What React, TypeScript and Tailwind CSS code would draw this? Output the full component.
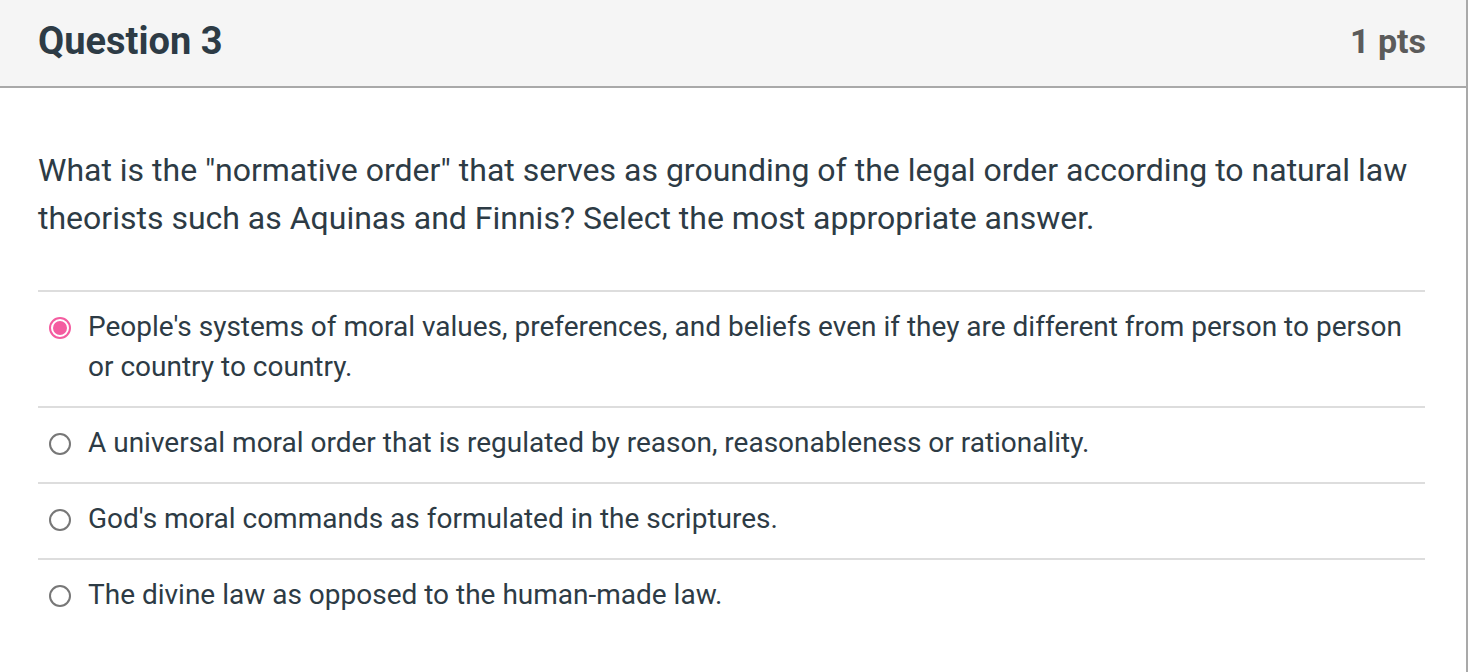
const options = [
  {
    text: "People's systems of moral values, preferences, and beliefs even if they are different from person to person or country to country.",
    selected: true,
  },
  { text: 'A universal moral order that is regulated by reason, reasonableness or rationality.', selected: false },
  { text: "God's moral commands as formulated in the scriptures.", selected: false },
  { text: 'The divine law as opposed to the human-made law.', selected: false },
]

function Radio({ checked }: { checked: boolean }) {
  if (checked) {
    return (
      <span className="flex h-[22px] w-[22px] shrink-0 items-center justify-center rounded-full border-2 border-[#f45ca0] bg-white">
        <span className="h-[14px] w-[14px] rounded-full bg-[#f45ca0]" />
      </span>
    )
  }
  return <span className="block h-[22px] w-[22px] shrink-0 rounded-full border-2 border-[#777777] bg-white" />
}

export default function App() {
  return (
    <div
      className="h-[672px] w-[1470px] bg-white text-[#2d3b45]"
      style={{ fontFamily: 'Roboto, "Liberation Sans", sans-serif' }}
    >
      <div className="h-full w-[1468px] border-r-2 border-[#a9a9a9]">
        <div className="flex h-[88px] items-center justify-between border-b-2 border-[#a9a9a9] bg-[#f5f5f5] pl-[38px] pr-[40px] pb-[4px]">
          <h2 className="text-[38px] font-bold leading-none text-[#2d3b45]">Question 3</h2>
          <span className="text-[34px] font-bold leading-none text-[#5b5b5b]">1 pts</span>
        </div>

        <div className="pl-[38px] pr-[41px]">
          <p className="mt-[58px] text-[32px] leading-[48px]">
            What is the "normative order" that serves as grounding of the legal order according to natural law
            theorists such as Aquinas and Finnis? Select the most appropriate answer.
          </p>

          <div className="mt-[48px]">
            {options.map(o => (
              <div key={o.text} className="flex gap-[17px] border-t-2 border-[#dddddd] py-[17px] pl-[11px]">
                <div className="flex h-[38px] items-center">
                  <Radio checked={o.selected} />
                </div>
                <p className="-mt-[2px] mb-[2px] text-[28px] leading-[40px]">{o.text}</p>
              </div>
            ))}
          </div>
        </div>
      </div>
    </div>
  )
}
